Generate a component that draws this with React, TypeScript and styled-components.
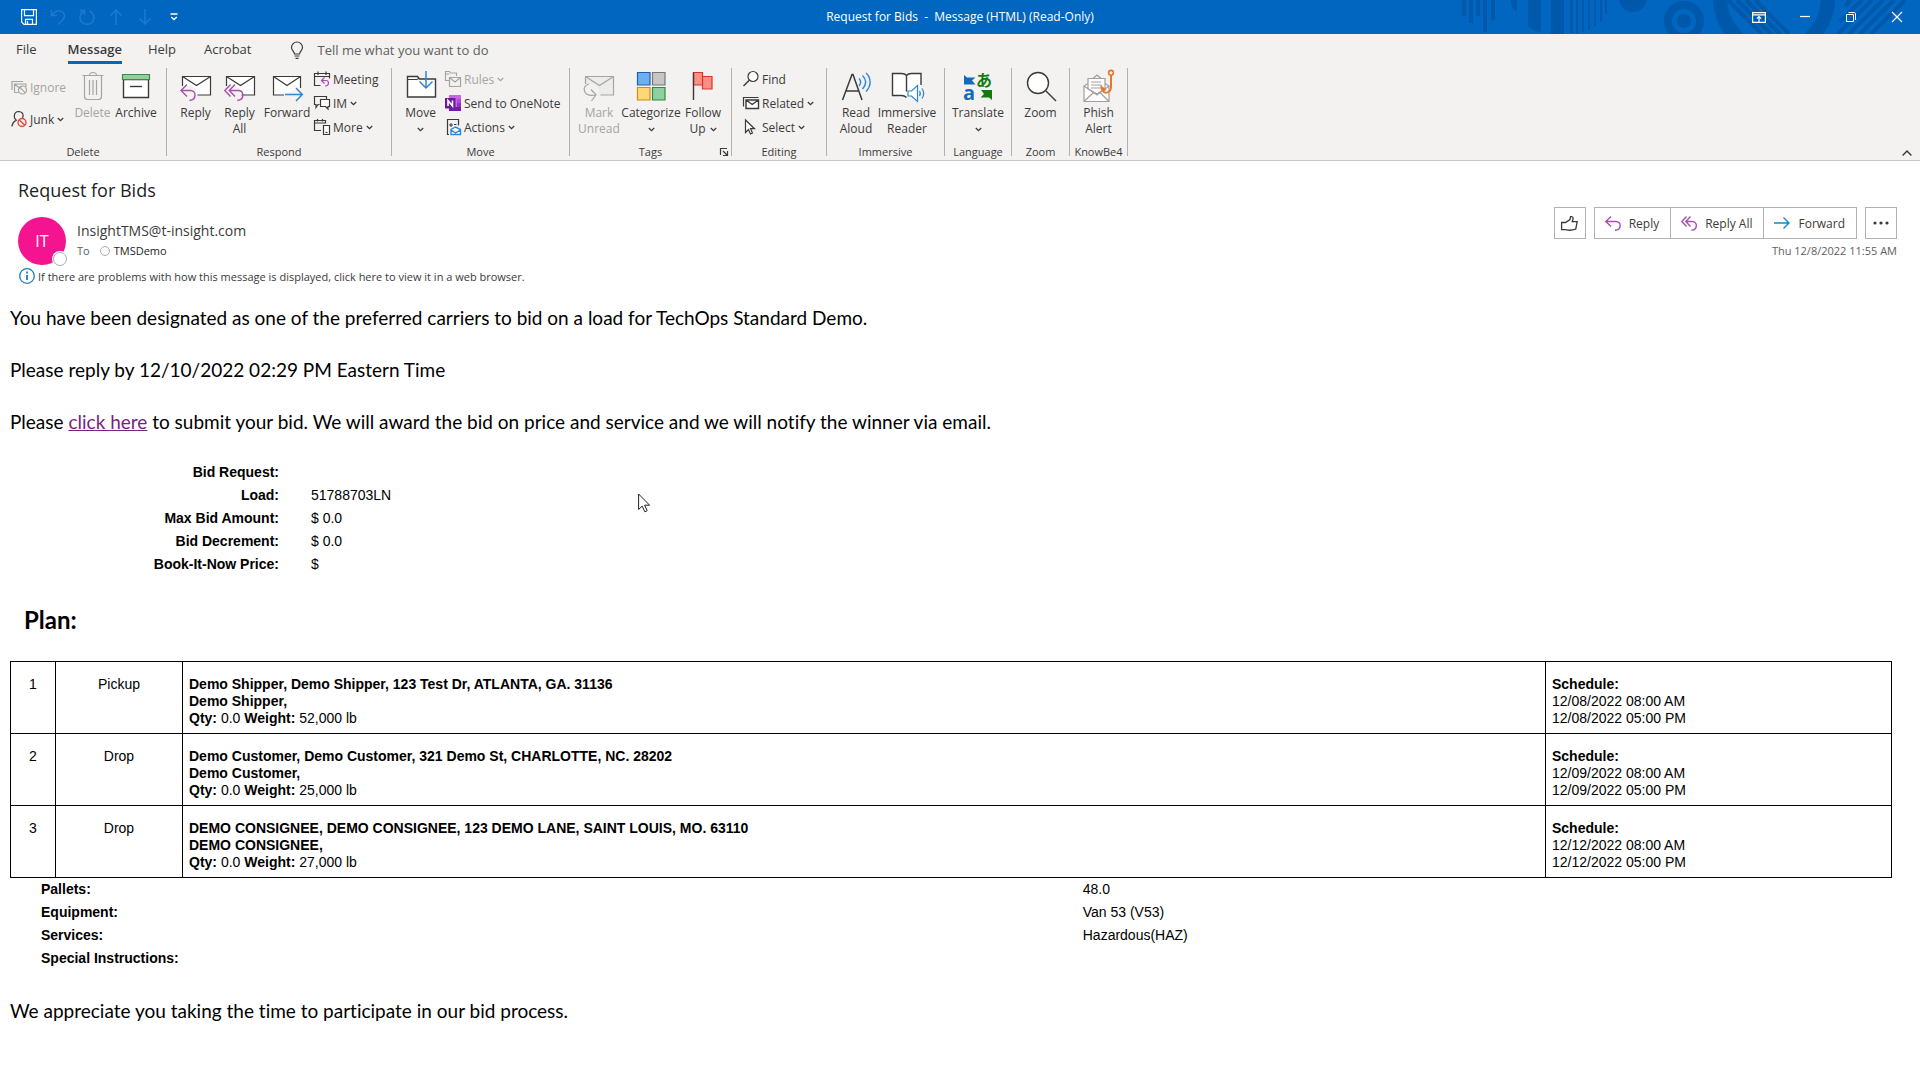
import React from "react";
import styled, { createGlobalStyle } from "styled-components";

const UI = '"Open Sans", "Noto Sans", sans-serif';
const BODY = 'Lato, "Open Sans", sans-serif';
const ARIAL = '"Liberation Sans", Arial, sans-serif';

const INK = "#3b3a39";
const MUTED = "#a6a4a2";
const PURPLE = "#a84fb0";
const BLUE = "#2b88d8";

const Global = createGlobalStyle`
  *, *::before, *::after { box-sizing: border-box; }
  body { margin: 0; background: #fff; font-family: ${UI}; font-size: 12px; color: ${INK}; }
  button, input { font: inherit; color: inherit; }
  button { border: 0; background: none; padding: 0; }
  svg { display: block; flex: none; overflow: visible; }
  p, h1, h2 { margin: 0; font-weight: 400; }
`;

/* ---------- title bar ---------- */

const TitleBar = styled.header`
  position: relative;
  display: grid;
  grid-template-columns: 1fr auto 1fr;
  align-items: center;
  height: 34px;
  background: #0066c0;
  color: #fff;
  overflow: hidden;
`;
const Pattern = styled.svg`
  position: absolute;
  right: 0;
  top: 0;
`;
const QuickAccess = styled.div`
  position: relative;
  display: flex;
  padding-left: 14px;
`;
const QuickButton = styled.button<{ $off?: boolean }>`
  display: grid;
  place-items: center;
  width: 29px;
  height: 34px;
  color: ${(p) => (p.$off ? "#1f7ace" : "#fff")};
`;
const WindowTitle = styled.div`
  position: relative;
  line-height: 16px;
  white-space: pre;
`;
const WindowButtons = styled.div`
  position: relative;
  display: flex;
  justify-content: flex-end;
`;
const WindowButton = styled.button`
  display: grid;
  place-items: center;
  width: 46px;
  height: 32px;
`;

/* ---------- ribbon ---------- */

const Ribbon = styled.div`
  background: #f3f2f1;
  border-bottom: 1px solid #c8c6c4;
`;
const Tabs = styled.nav`
  display: flex;
  align-items: center;
  height: 34px;
  padding: 0 0 2px 16px;
  font-size: 13px;
`;
const Tab = styled.button<{ $active?: boolean; $gap: number }>`
  height: 28px;
  line-height: 20px;
  padding: 3px 0 2px;
  margin-right: ${(p) => p.$gap}px;
  border-bottom: 3px solid ${(p) => (p.$active ? "#0066c0" : "transparent")};
  font-weight: ${(p) => (p.$active ? 600 : 400)};
`;
const Tell = styled.label`
  display: flex;
  align-items: center;
  gap: 14px;
`;
const TellInput = styled.input`
  width: 240px;
  border: 0;
  padding: 0;
  background: transparent;
  outline: none;
  &::placeholder { color: #605e5c; opacity: 1; }
`;
const Groups = styled.div`
  display: flex;
  position: relative;
  height: 92px;
`;
const Group = styled.section<{ $w: number }>`
  position: relative;
  display: flex;
  flex-direction: column;
  width: ${(p) => p.$w}px;
  height: 88px;
  border-right: 1px solid #b3b0ad;
`;
const GroupBody = styled.div<{ $pad?: number }>`
  display: flex;
  flex: none;
  height: 76px;
  padding-left: ${(p) => p.$pad ?? 0}px;
  justify-content: ${(p) => (p.$pad === undefined ? "center" : "flex-start")};
`;
const GroupLabel = styled.div`
  line-height: 16px;
  text-align: center;
  font-size: 11px;
`;
const Launcher = styled.button`
  position: absolute;
  right: 3px;
  bottom: 0;
`;
const Big = styled.button<{ $w: number; $off?: boolean }>`
  display: flex;
  flex-direction: column;
  align-items: center;
  width: ${(p) => p.$w}px;
  padding-top: 3px;
  line-height: 16px;
  color: ${(p) => (p.$off ? MUTED : INK)};
  white-space: nowrap;
  > svg:first-child { margin-bottom: 4px; }
`;
const BigLine = styled.span`
  display: flex;
  align-items: center;
  gap: 4px;
  height: 16px;
`;
const Stack = styled.div<{ $w?: number; $row?: number; $ml?: number }>`
  display: flex;
  flex-direction: column;
  width: ${(p) => (p.$w ? p.$w + "px" : "auto")};
  margin-left: ${(p) => p.$ml ?? 0}px;
  padding-top: ${(p) => (p.$row === 32 ? 4 : 0)}px;
  > button { height: ${(p) => p.$row ?? 24}px; }
`;
const Small = styled.button<{ $off?: boolean }>`
  display: flex;
  align-items: center;
  gap: 3px;
  padding-bottom: 2px;
  white-space: nowrap;
  color: ${(p) => (p.$off ? MUTED : INK)};
`;
const Collapse = styled.button`
  position: absolute;
  right: 8px;
  bottom: 4px;
`;

/* ---------- message header ---------- */

const Head = styled.section`
  padding: 17px 23px 0 18px;
`;
const Subject = styled.h1`
  font-size: 18px;
  line-height: 24px;
  color: #201f1e;
`;
const SenderRow = styled.div`
  display: flex;
  align-items: flex-start;
  margin-top: 5px;
`;
const Avatar = styled.div`
  position: relative;
  display: grid;
  place-items: center;
  width: 48px;
  height: 48px;
  margin-top: 10px;
  border-radius: 50%;
  background: #f5148f;
  color: #fff;
  font-size: 16px;
`;
const Presence = styled.span`
  position: absolute;
  right: -1px;
  bottom: -1px;
  width: 14px;
  height: 14px;
  border-radius: 50%;
  border: 1px solid #a0aeb2;
  background: #fff;
  box-shadow: 0 0 0 1px #fff;
`;
const Who = styled.div`
  flex: 1;
  padding: 13px 0 0 11px;
`;
const Sender = styled.div`
  font-size: 14px;
  line-height: 22px;
`;
const ToLine = styled.div`
  display: flex;
  align-items: center;
  line-height: 18px;
  font-size: 11px;
  color: #605e5c;
`;
const Dot = styled.span`
  width: 10px;
  height: 10px;
  margin: 0 4px 0 10px;
  border: 1px solid #a0aeb2;
  border-radius: 50%;
`;
const Recipient = styled.span`
  color: #252423;
`;
const Side = styled.div`
  display: flex;
  flex-direction: column;
  align-items: flex-end;
`;
const Actions = styled.div`
  display: flex;
  gap: 8px;
`;
const Segment = styled.div`
  display: flex;
  border: 1px solid #b3b0ad;
  > button + button { border-left: 1px solid #b3b0ad; }
`;
const SegmentButton = styled.button`
  display: flex;
  align-items: center;
  gap: 8px;
  height: 30px;
  padding: 0 11px 0 10px;
`;
const SquareButton = styled.button`
  display: grid;
  place-items: center;
  width: 32px;
  height: 32px;
  border: 1px solid #b3b0ad;
`;
const Sent = styled.time`
  margin-top: 4px;
  line-height: 16px;
  font-size: 11px;
  color: #605e5c;
`;
const InfoBar = styled.button`
  display: flex;
  align-items: center;
  gap: 2px;
  height: 18px;
  margin-top: 2px;
  font-size: 11px;
`;

/* ---------- message body ---------- */

const Message = styled.main`
  padding: 20px 28px 0 10px;
  color: #000;
  font-family: ${ARIAL};
  font-size: 14px;
`;
const Para = styled.p`
  font-family: ${BODY};
  font-size: 19px;
  font-variant-ligatures: none;
  line-height: 26px;
  margin-bottom: 26px;
`;
const Link = styled.a`
  color: #7a1f7f;
  text-decoration: underline;
`;
const BidTable = styled.table`
  border-collapse: collapse;
  line-height: 17px;
  th { width: 269px; text-align: right; padding: 3px 0; }
  td { padding: 3px 0 3px 32px; }
`;
const PlanTitle = styled.h2`
  margin: 28px 0 25px 14px;
  font-family: ${BODY};
  font-size: 24px;
  font-weight: 700;
  line-height: 32px;
`;
const PlanTable = styled.table`
  width: 100%;
  border-collapse: collapse;
  table-layout: fixed;
  line-height: 17px;
  td {
    border: 1px solid #000;
    padding: 14px 6px 6px;
    vertical-align: top;
  }
`;
const Col = styled.col<{ $w?: string }>`
  width: ${(p) => p.$w ?? "auto"};
`;
const Mid = styled.td`
  text-align: center;
`;
const Extras = styled.table`
  width: 100%;
  border-collapse: collapse;
  line-height: 17px;
  th { width: 57%; text-align: left; padding: 3px 0 3px 31px; }
  td { padding: 3px 0; }
`;
const Closing = styled(Para)`
  margin: 28px 0 0;
`;
const Pointer = styled.svg`
  position: absolute;
  left: 638px;
  top: 493px;
`;

/* ---------- icons ---------- */

const Svg = ({ w, h, children, c = INK }: { w: number; h: number; c?: string; children: React.ReactNode }) => (
  <svg width={w} height={h} viewBox={`0 0 ${w} ${h}`} fill="none" stroke={c} strokeWidth={1.2} aria-hidden="true">
    {children}
  </svg>
);

const Chevron = ({ c = INK }: { c?: string }) => (
  <Svg w={7} h={5} c={c}>
    <path d="M0.8 1l2.7 2.6L6.2 1" strokeWidth={1.3} />
  </Svg>
);

const Envelope = ({ children, c = INK, fill = "#fff" }: { children: React.ReactNode; c?: string; fill?: string }) => (
  <Svg w={32} h={30} c={c}>
    <path d="M2.5 5.5h28V24h-28z" fill={fill} stroke="none" />
    <path d="M2.5 15V5.5h28V24H17.5" />
    <path d="M2.5 5.5l14 9 14-9" />
    {children}
  </Svg>
);

const IconReply = () => (
  <Envelope>
    <path d="M2 15h10l4 5v10H2z" fill="#f3f2f1" stroke="none" />
    <path d="M7 13.5L1 19.5l6 6M1 19.5h9.5c3 0 4.5 2 4.5 4.8s-1.5 4.9-5.5 5.2" stroke={PURPLE} strokeWidth={1.4} />
  </Envelope>
);
const IconReplyAll = () => (
  <Envelope>
    <path d="M2 15h10l5 5v10H2z" fill="#f3f2f1" stroke="none" />
    <path d="M6.5 13.5L.8 19.5l5.7 6M11 13.5L5.3 19.5l5.7 6M5.3 19.5h9c3 0 4.5 2 4.5 4.8s-1.5 4.9-5.5 5.2" stroke={PURPLE} strokeWidth={1.4} />
  </Envelope>
);
const IconForward = () => (
  <Svg w={32} h={30}>
    <path d="M13 24H2.5V5.5h27V17" fill="#fff" />
    <path d="M2.5 5.5l13.5 9 13.5-9" />
    <path d="M14 23.5h17M25 17l6.3 6.5L25 30" stroke={BLUE} strokeWidth={1.5} />
  </Svg>
);
const IconTrash = () => (
  <Svg w={32} h={30} c={MUTED}>
    <path d="M5.5 4.5h21M12.5 4.5c0-4 7-4 7 0M7.5 5v20.5c0 2 1 3 3 3h11c2 0 3-1 3-3V5M12.5 9v15M16 9v15M19.5 9v15" />
  </Svg>
);
const IconArchive = () => (
  <Svg w={32} h={30}>
    <path d="M3.5 8.5h25v18h-25z" fill="#fff" strokeWidth={1.4} />
    <path d="M2.5 3.5h27v5h-27z" fill="#8fd19e" stroke="#3a8a4c" />
    <path d="M10 15.5h12" strokeWidth={1.4} />
  </Svg>
);
const IconMove = () => (
  <Svg w={32} h={30}>
    <path d="M2.5 26V5.5h10l2 2.5h16v18z" fill="#fff" strokeWidth={1.4} />
    <path d="M2.5 8.5h9l2.5-1" />
    <path d="M21 0v17M14.5 10.5L21 17l6.5-6.5" stroke={BLUE} strokeWidth={1.5} />
  </Svg>
);
const IconUnread = () => (
  <Envelope c={MUTED} fill="#ececeb">
    <path d="M2 13h10l4 5v12H2z" fill="#f3f2f1" stroke="none" />
    <path d="M6 13c-4 1-5.5 4-4.5 7 1 3.5 5 5 11 4M8 18.5l5 5.3L8.5 30" />
  </Envelope>
);
const IconCategorize = () => (
  <Svg w={32} h={30}>
    <path d="M2.5 1.5h12.5V14H2.5z" fill="#6cb0f0" stroke="#1f5fa8" />
    <path d="M17.5 1.5H30V14H17.5z" fill="#c8c6c4" stroke="#797775" />
    <path d="M2.5 16.5h12.5V29H2.5z" fill="#ffd978" stroke="#d08a1c" />
    <path d="M17.5 16.5H30V29H17.5z" fill="#8fd19e" stroke="#2e8b45" />
  </Svg>
);
const IconFlag = () => (
  <Svg w={32} h={30}>
    <path d="M15.5 5.5h9.5V18h-9.5z" fill="#ff8f85" stroke="#d9362b" />
    <path d="M6.5 1.5H15.5V14H6.5z" fill="#ff8f85" stroke="#d9362b" />
    <path d="M6.5 1.5V29" strokeWidth={1.4} />
  </Svg>
);
const IconAloud = () => (
  <Svg w={32} h={30}>
    <path d="M2.5 29L12 3.5h1L22 29M6 20h13" strokeWidth={1.5} />
    <path d="M19 7.5c2 2 2 5 0 7.5M22.5 4.5c4 4 4 9 0 13.5M26 2c5.5 5 5.5 13 0 18.5" stroke={BLUE} strokeWidth={1.4} />
  </Svg>
);
const IconReader = () => (
  <Svg w={32} h={30}>
    <path d="M15.5 4.5C14 2.5 12 2.5 10.5 2.5H1.5v22h9c2 0 3.5.5 5 2V4.5c1.5-2 3.5-2 5-2h9.5V15l-14 10" fill="#fff" stroke="none" />
    <path d="M15.5 4.5C14 2.5 12 2.5 10.5 2.5H1.5v22h9c2 0 3.5.5 5 2M15.5 4.5c1.5-2 3.5-2 5-2h9.5V14M15.5 4.5v16" strokeWidth={1.4} />
    <path d="M17 20h3.5l6-5.5v16l-6-5.5H17z" fill="#fff" stroke={BLUE} />
    <path d="M28.5 20c1 1.5 1 3.5 0 5M31 17.5c2 3 2 7 0 10" stroke={BLUE} />
  </Svg>
);
const Glyph = styled.text`
  stroke: none;
  font-weight: 700;
  font-family: "Open Sans", "Noto Sans CJK JP", sans-serif;
`;
const IconTranslate = () => (
  <Svg w={32} h={30}>
    <path d="M2 4l3 2.5h8.500L10 9.500l3.500 4H2z" fill="#0f6cbd" stroke="none" />
    <path d="M30 29l-3-2.5h-8.500l3.500-3.500-3-4h11z" fill="#107c10" stroke="none" />
    <Glyph x={14} y={15} fontSize={16} fill="#107c10">あ</Glyph>
    <Glyph x={1} y={29} fontSize={20} fill="#0f6cbd">a</Glyph>
  </Svg>
);
const IconZoom = () => (
  <Svg w={32} h={30}>
    <circle cx="13" cy="12" r="10.5" fill="#fff" strokeWidth={1.4} />
    <path d="M20.5 19.5L31 30" strokeWidth={1.4} />
  </Svg>
);
const IconPhish = () => (
  <Svg w={32} h={30} c="#a19f9d">
    <path d="M5 12.5l-4 2.5v15.5h25V15l-4-2.5" fill="#fff" />
    <path d="M10 7.5L14 4l4 3.5" />
    <path d="M5 18V7.5h17V18l-8 5z" fill="#fff" />
    <path d="M8 11h10M8 14h11M8 17h11" />
    <path d="M1 15l9.5 6.5L1 30.5M26 15l-9 6.5 9 9M10.5 21.5l3.5 2.5 3-2.5" />
    <path d="M28 4.5V16c0 7-9 8-9.5 0l4 3.5" stroke="#e8762c" strokeWidth={2} />
    <circle cx="28" cy="1.8" r="2.4" stroke="#e8762c" strokeWidth={1.6} />
  </Svg>
);

const IconIgnore = () => (
  <Svg w={16} h={16} c={MUTED}>
    <path d="M1 11V2.5h11M3.5 13.5v-8.5h11.5v3M3.5 5l5 4 2-1.5M3.5 13.5h4" />
    <circle cx="11.5" cy="11" r="4" />
    <path d="M8.7 8.2l5.6 5.6" />
  </Svg>
);
const IconJunk = () => (
  <Svg w={16} h={16}>
    <path d="M.8 15.5c.5-3 2-5 4-6M6 9.5c-4-2-3.5-8.7 1.5-9 4.5 0 5.5 4 4 6.5" />
    <circle cx="11" cy="11.5" r="4" stroke="#e0483c" strokeWidth={1.4} />
    <path d="M8.2 8.7l5.6 5.6" stroke="#e0483c" strokeWidth={1.4} />
  </Svg>
);
const IconMeeting = () => (
  <Svg w={16} h={16}>
    <path d="M6.5 14.5h-6v-12h15v5M.5 5.5h15M4 .5v3.5M12 .5v3.5" />
    <path d="M10.5 6.5L7.5 9.5l3 3M7.5 9.5h4.5c3.5 0 3.5 5.5-1 5.5" stroke={PURPLE} />
  </Svg>
);
const IconIM = () => (
  <Svg w={16} h={16}>
    <path d="M5.5 9.5H4l-2 3v-3H.5v-8h12v3" />
    <path d="M6.5 4.5h9v7h-1.5V14l-2.5-2.5h-5z" fill="#fff" />
  </Svg>
);
const IconMore = () => (
  <Svg w={16} h={16}>
    <path d="M7 11.5H.5v-10h11v3M.5 4h11M3.5 0v2.5M8.5 0v2.5" />
    <path d="M9.5 6.5h6v9h-6z" fill="#fff" />
    <path d="M11.5 13.5h2" />
  </Svg>
);
const IconRules = () => (
  <Svg w={16} h={16} c={MUTED}>
    <path d="M4 9.5H.5v-9h4l1 1.5h6V5M.5 3h4" />
    <path d="M4.5 6.5h11v9h-11zM4.5 6.5l5.5 4.5 5.5-4.5" />
  </Svg>
);
const IconOneNote = () => (
  <Svg w={16} h={16}>
    <path d="M4 0h12v16H4z" fill="#ca64ea" stroke="none" />
    <path d="M12 4h4v4h-4z" fill="#ae4bd5" stroke="none" />
    <path d="M12 8h4v4h-4z" fill="#9332bf" stroke="none" />
    <path d="M4 12h12v4H4z" fill="#7719aa" stroke="none" />
    <path d="M0 3h10.5v10.5H0z" fill="#6b1a99" stroke="none" />
    <path d="M3 11V5.5l4.5 5.5V5.5" stroke="#fff" strokeWidth={1.6} />
  </Svg>
);
const IconActions = () => (
  <Svg w={16} h={16}>
    <path d="M4 15.5H2.5V.5h11v6" />
    <path d="M5 5h2v2H5zM9 5.5h2.5" strokeWidth={1} />
    <path d="M6 15.5v-5l4.5-2.5 5 2.5v5zM6 11l4.5 3 5-3" fill="#fff" stroke={BLUE} strokeWidth={1.4} />
  </Svg>
);
const IconFind = () => (
  <Svg w={16} h={16}>
    <circle cx="10" cy="5.5" r="5" fill="#fff" />
    <path d="M6.5 9L.5 15" strokeWidth={1.5} />
  </Svg>
);
const IconRelated = () => (
  <Svg w={16} h={16}>
    <path d="M.5 11.5V2.5h15" />
    <path d="M3 5h12.5v8.5H3zM3 5l6.2 4.5L15.5 5" fill="#fff" strokeWidth={1.4} />
  </Svg>
);
const IconSelect = () => (
  <Svg w={16} h={16}>
    <path d="M2.5 1v12.5l3-3 2 4.5 2-1-2-4.3h4z" fill="#fff" />
  </Svg>
);

const TitlePattern = () => (
  <Pattern width="460" height="34" viewBox="0 0 460 34" fill="#0058aa" aria-hidden="true">
    <path d="M2 0h4v16H2zM9 0h4v23H9zM16 0h4v16h-4zM23 0h4v32h-4zM31 0h4v20h-4zM51 0h6v12c-3-2-6-6-6-12z" />
    <path d="M68 0h13v32c-5 0-10-3-13-6zM91 0h13v34H91z" />
    <path d="M110 0h3v33h-3zM116 0h2v33h-2zM122 0h2v32h-2zM128 0h2v30h-2zM134 0h2v26h-2zM140 0h2v22h-2zM145 0h2v14h-2z" />
    <circle cx="173" cy="-2" r="14" />
    <circle cx="224" cy="21" r="16" fill="none" stroke="#0058aa" strokeWidth="8" />
    <circle cx="224" cy="21" r="7" />
    <circle cx="314" cy="-2" r="54" fill="none" stroke="#0058aa" strokeWidth="14" />
    <path d="M268 0l34 34M277 0l34 34M286 0l34 34M295 0l34 34M385 6l6-6M380 22l22-22M378 34l34-34M389 34l34-34M400 34l34-34M411 34l34-34" stroke="#0058aa" strokeWidth="4" />
  </Pattern>
);

/* ---------- data ---------- */

const bid = [
  ["Bid Request:", ""],
  ["Load:", "51788703LN"],
  ["Max Bid Amount:", "$ 0.0"],
  ["Bid Decrement:", "$ 0.0"],
  ["Book-It-Now Price:", "$"],
];
const stops = [
  { kind: "Pickup", line: "Demo Shipper, Demo Shipper, 123 Test Dr, ATLANTA, GA. 31136", name: "Demo Shipper,", weight: "52,000 lb", date: "12/08/2022" },
  { kind: "Drop", line: "Demo Customer, Demo Customer, 321 Demo St, CHARLOTTE, NC. 28202", name: "Demo Customer,", weight: "25,000 lb", date: "12/09/2022" },
  { kind: "Drop", line: "DEMO CONSIGNEE, DEMO CONSIGNEE, 123 DEMO LANE, SAINT LOUIS, MO. 63110", name: "DEMO CONSIGNEE,", weight: "27,000 lb", date: "12/12/2022" },
];
const extras = [
  ["Pallets:", "48.0"],
  ["Equipment:", "Van 53 (V53)"],
  ["Services:", "Hazardous(HAZ)"],
  ["Special Instructions:", ""],
];

export default function App() {
  return (
    <>
      <Global />
      <TitleBar>
        <TitlePattern />
        <QuickAccess>
          <QuickButton aria-label="Save">
            <Svg w={16} h={16} c="currentColor">
              <path d="M.6.6h14.8v14.8H3L.6 13zM3.5.6v6h9v-6M4.5 15.4v-5h7v5M6.5 12v3" />
            </Svg>
          </QuickButton>
          <QuickButton $off aria-label="Undo">
            <Svg w={16} h={16} c="currentColor">
              <path d="M1.5 1v5.5H7M1.5 6.5C5 1.5 10 .5 13 3.5c4 4.5-1 8.5-5 12" strokeWidth={1.5} />
            </Svg>
          </QuickButton>
          <QuickButton $off aria-label="Redo">
            <Svg w={16} h={16} c="currentColor">
              <path d="M1 1.5h4.5V6M5 2c-5 3-5 8.5-1.5 11.5s8.5 2 10.5-1.5 1-8-3.5-10" strokeWidth={1.5} />
            </Svg>
          </QuickButton>
          <QuickButton $off aria-label="Previous item">
            <Svg w={12} h={16} c="currentColor">
              <path d="M6 16V1M.5 6.5L6 1l5.5 5.5" strokeWidth={1.5} />
            </Svg>
          </QuickButton>
          <QuickButton $off aria-label="Next item">
            <Svg w={12} h={16} c="currentColor">
              <path d="M6 0v15M.5 9.5L6 15l5.5-5.5" strokeWidth={1.5} />
            </Svg>
          </QuickButton>
          <QuickButton aria-label="Customize toolbar">
            <Svg w={8} h={8} c="currentColor">
              <path d="M.5 1h7M1.2 4L4 6.5 6.8 4" strokeWidth={1.4} />
            </Svg>
          </QuickButton>
        </QuickAccess>
        <WindowTitle>{"Request for Bids  -  Message (HTML) (Read-Only)"}</WindowTitle>
        <WindowButtons>
          <WindowButton aria-label="Ribbon display options">
            <Svg w={14} h={11} c="#fff">
              <path d="M.6.6h12.8v9.8H.6zM.6 2.8h12.8M7 10V4.5M4.8 6.7L7 4.5l2.2 2.2" />
            </Svg>
          </WindowButton>
          <WindowButton aria-label="Minimize">
            <Svg w={10} h={10} c="#fff"><path d="M0 4.5h10" /></Svg>
          </WindowButton>
          <WindowButton aria-label="Restore">
            <Svg w={10} h={10} c="#fff"><path d="M.5 2.5h7v7h-7zM2.5.5h5.5c1 0 1.5.5 1.5 1.5V8" strokeWidth={1} /></Svg>
          </WindowButton>
          <WindowButton aria-label="Close">
            <Svg w={10} h={10} c="#fff"><path d="M0 0l10 10M10 0L0 10" /></Svg>
          </WindowButton>
        </WindowButtons>
      </TitleBar>

      <Ribbon>
        <Tabs>
          <Tab $gap={31}>File</Tab>
          <Tab $gap={26} $active>Message</Tab>
          <Tab $gap={28}>Help</Tab>
          <Tab $gap={40}>Acrobat</Tab>
          <Tell>
            <Svg w={12} h={17}>
              <path d="M3.5 12c0-2.5-3-3.5-3-6.5a5.5 5.5 0 0111 0c0 3-3 4-3 6.5zM3.5 14h5M4.5 16.3h3" />
            </Svg>
            <TellInput aria-label="Tell me what you want to do" placeholder="Tell me what you want to do" />
          </Tell>
        </Tabs>
        <Groups>
          <Group $w={167}>
            <GroupBody $pad={11}>
              <Stack $w={61} $row={32}>
                <Small $off><IconIgnore />Ignore</Small>
                <Small><IconJunk />Junk <Chevron /></Small>
              </Stack>
              <Big $w={41} $off><IconTrash />Delete</Big>
              <Big $w={46}><IconArchive />Archive</Big>
            </GroupBody>
            <GroupLabel>Delete</GroupLabel>
          </Group>
          <Group $w={225}>
            <GroupBody $pad={8}>
              <Big $w={41}><IconReply />Reply</Big>
              <Big $w={47}><IconReplyAll />Reply<BigLine>All</BigLine></Big>
              <Big $w={48}><IconForward />Forward</Big>
              <Stack $ml={3}>
                <Small><IconMeeting />Meeting</Small>
                <Small><IconIM />IM <Chevron /></Small>
                <Small><IconMore />More <Chevron /></Small>
              </Stack>
            </GroupBody>
            <GroupLabel>Respond</GroupLabel>
          </Group>
          <Group $w={178}>
            <GroupBody $pad={8}>
              <Big $w={41}><IconMove />Move<BigLine><Chevron /></BigLine></Big>
              <Stack $ml={4}>
                <Small $off><IconRules />Rules <Chevron c={MUTED} /></Small>
                <Small><IconOneNote />Send to OneNote</Small>
                <Small><IconActions />Actions <Chevron /></Small>
              </Stack>
            </GroupBody>
            <GroupLabel>Move</GroupLabel>
          </Group>
          <Group $w={162}>
            <GroupBody $pad={7}>
              <Big $w={44} $off><IconUnread />Mark<BigLine>Unread</BigLine></Big>
              <Big $w={60}><IconCategorize />Categorize<BigLine><Chevron /></BigLine></Big>
              <Big $w={44}><IconFlag />Follow<BigLine>Up <Chevron /></BigLine></Big>
            </GroupBody>
            <GroupLabel>Tags</GroupLabel>
            <Launcher aria-label="Tags options">
              <Svg w={8} h={8}><path d="M.5 7V.5H7M3 3l4 4M7.5 3v4.5H3" /></Svg>
            </Launcher>
          </Group>
          <Group $w={95}>
            <GroupBody $pad={11}>
              <Stack>
                <Small><IconFind />Find</Small>
                <Small><IconRelated />Related <Chevron /></Small>
                <Small><IconSelect />Select <Chevron /></Small>
              </Stack>
            </GroupBody>
            <GroupLabel>Editing</GroupLabel>
          </Group>
          <Group $w={118}>
            <GroupBody $pad={7}>
              <Big $w={44}><IconAloud />Read<BigLine>Aloud</BigLine></Big>
              <Big $w={58}><IconReader />Immersive<BigLine>Reader</BigLine></Big>
            </GroupBody>
            <GroupLabel>Immersive</GroupLabel>
          </Group>
          <Group $w={67}>
            <GroupBody>
              <Big $w={60}><IconTranslate />Translate<BigLine><Chevron /></BigLine></Big>
            </GroupBody>
            <GroupLabel>Language</GroupLabel>
          </Group>
          <Group $w={58}>
            <GroupBody>
              <Big $w={44}><IconZoom />Zoom</Big>
            </GroupBody>
            <GroupLabel>Zoom</GroupLabel>
          </Group>
          <Group $w={58}>
            <GroupBody>
              <Big $w={44}><IconPhish />Phish<BigLine>Alert</BigLine></Big>
            </GroupBody>
            <GroupLabel>KnowBe4</GroupLabel>
          </Group>
          <Collapse aria-label="Collapse the ribbon">
            <Svg w={10} h={6}><path d="M.6 5.4L5 1l4.4 4.4" strokeWidth={1.4} /></Svg>
          </Collapse>
        </Groups>
      </Ribbon>

      <Head>
        <Subject>Request for Bids</Subject>
        <SenderRow>
          <Avatar>IT<Presence /></Avatar>
          <Who>
            <Sender>InsightTMS@t-insight.com</Sender>
            <ToLine>To<Dot /><Recipient>TMSDemo</Recipient></ToLine>
          </Who>
          <Side>
            <Actions>
              <SquareButton aria-label="Like">
                <Svg w={17} h={15}>
                  <path d="M.6 6.5h4L9 3.5l.5-2.8c2-.5 3 .8 2.5 2.5l-.8 2.5h5l-1.5 7.5c-3 1-7 1.3-10 .5H.6z" strokeWidth={1.3} />
                </Svg>
              </SquareButton>
              <Segment>
                <SegmentButton>
                  <Svg w={16} h={15} c={PURPLE}>
                    <path d="M6 .5L.8 5.5 6 10.5M.8 5.5h10c6 0 6 8.5-.8 8.7" strokeWidth={1.4} />
                  </Svg>
                  Reply
                </SegmentButton>
                <SegmentButton>
                  <Svg w={16} h={15} c={PURPLE}>
                    <path d="M5.5.5L.8 5.5l4.7 5M9.5.5L4.8 5.5l4.7 5M4.8 5.5h6.5c5.5 0 5.5 8.5-.8 8.7" strokeWidth={1.4} />
                  </Svg>
                  Reply All
                </SegmentButton>
                <SegmentButton>
                  <Svg w={16} h={12} c="#1a86c7">
                    <path d="M0 6h15M9.5.5L15 6l-5.5 5.5" strokeWidth={1.4} />
                  </Svg>
                  Forward
                </SegmentButton>
              </Segment>
              <SquareButton aria-label="More actions">
                <Svg w={16} h={4}>
                  <g fill={INK} stroke="none"><circle cx="2" cy="2" r="1.6" /><circle cx="8" cy="2" r="1.6" /><circle cx="14" cy="2" r="1.6" /></g>
                </Svg>
              </SquareButton>
            </Actions>
            <Sent>Thu 12/8/2022 11:55 AM</Sent>
          </Side>
        </SenderRow>
        <InfoBar>
          <Svg w={18} h={16} c="#1a7dc0">
            <circle cx="9" cy="8" r="7.3" strokeWidth={1.3} />
            <path d="M9 7v5M9 3.5v2" strokeWidth={1.8} />
          </Svg>
          If there are problems with how this message is displayed, click here to view it in a web browser.
        </InfoBar>
      </Head>

      <Message>
        <Para>You have been designated as one of the preferred carriers to bid on a load for TechOps Standard Demo.</Para>
        <Para>Please reply by 12/10/2022 02:29 PM Eastern Time</Para>
        <Para>
          Please <Link href="#bid">click here</Link> to submit your bid. We will award the bid on price and service and we will notify the winner via email.
        </Para>
        <BidTable>
          <tbody>
            {bid.map(([k, v]) => (
              <tr key={k}><th scope="row">{k}</th><td>{v}</td></tr>
            ))}
          </tbody>
        </BidTable>
        <PlanTitle>Plan:</PlanTitle>
        <PlanTable>
          <colgroup><Col $w="45px" /><Col $w="127px" /><Col /><Col $w="346px" /></colgroup>
          <tbody>
            {stops.map((s, i) => (
              <tr key={s.line}>
                <Mid>{i + 1}</Mid>
                <Mid>{s.kind}</Mid>
                <td>
                  <b>{s.line}</b><br />
                  <b>{s.name}</b><br />
                  <b>Qty:</b> 0.0 <b>Weight:</b> {s.weight}
                </td>
                <td>
                  <b>Schedule:</b><br />
                  {s.date} 08:00 AM<br />
                  {s.date} 05:00 PM
                </td>
              </tr>
            ))}
          </tbody>
        </PlanTable>
        <Extras>
          <tbody>
            {extras.map(([k, v]) => (
              <tr key={k}><th scope="row">{k}</th><td>{v}</td></tr>
            ))}
          </tbody>
        </Extras>
        <Closing>We appreciate you taking the time to participate in our bid process.</Closing>
      </Message>

      <Pointer width="13" height="20" viewBox="0 0 13 20" aria-hidden="true">
        <path d="M.6 1v15.5l3.6-3.4 2.6 5.7 2.4-1.1-2.6-5.5h5z" fill="#fff" stroke="#222" strokeWidth="1" />
      </Pointer>
    </>
  );
}
